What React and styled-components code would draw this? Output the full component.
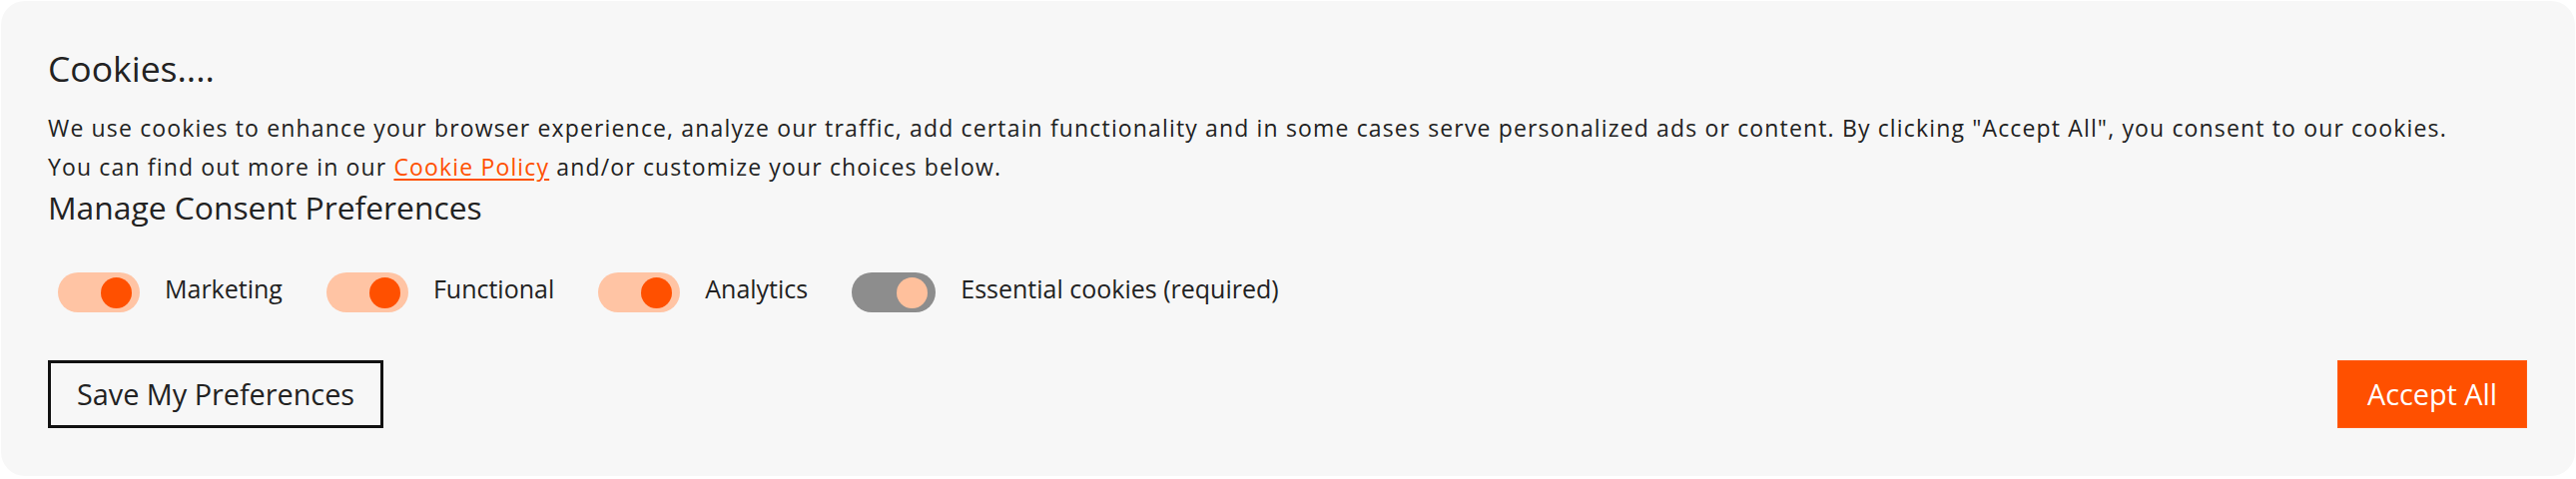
import React from "react";
import styled, { createGlobalStyle } from "styled-components";

const GlobalStyle = createGlobalStyle`
  html, body {
    margin: 0;
    padding: 0;
    background: #ffffff;
  }
  body {
    font-family: "Open Sans", "Noto Sans", "Liberation Sans", sans-serif;
    color: #222222;
  }
  * { box-sizing: border-box; }
`;

const Page = styled.div`
  padding: 1px;
`;

const Card = styled.section`
  background: #f7f7f7;
  border-radius: 24px;
  padding: 46px 48px 48px 47px;
`;

const Title = styled.h2`
  margin: 0;
  font-size: 35.5px;
  line-height: 42px;
  font-weight: 400;
  color: #222222;
`;

const Text = styled.p`
  margin: 20px 0 0;
  font-size: 23px;
  line-height: 39px;
  letter-spacing: 1.15px;
  color: #222222;
`;

const Link = styled.a`
  color: #ff5000;
  text-decoration: underline;
  text-underline-offset: 3px;
`;

const Heading = styled.h3`
  margin: 2px 0 0;
  font-size: 31.8px;
  line-height: 38px;
  font-weight: 400;
  color: #222222;
`;

const ToggleRow = styled.div`
  display: flex;
  align-items: center;
  margin-top: 46px;
  padding-left: 10px;
`;

const ToggleItem = styled.label`
  display: flex;
  align-items: center;
  gap: 25px;
  margin-right: 44px;
`;

const Track = styled.span`
  display: flex;
  align-items: center;
  justify-content: flex-end;
  width: ${(p) => (p.$locked ? "84px" : "82px")};
  height: 40px;
  padding-right: 8px;
  border-radius: 20px;
  background: ${(p) => (p.$locked ? "#8d8d8d" : "#ffc4a4")};
`;

const Knob = styled.span`
  width: 31px;
  height: 31px;
  border-radius: 50%;
  background: ${(p) => (p.$locked ? "#ffc09c" : "#ff5000")};
`;

const Label = styled.span`
  font-size: 25px;
  line-height: 30px;
  padding-bottom: 9px;
  color: #222222;
`;

const Actions = styled.div`
  display: flex;
  justify-content: space-between;
  align-items: center;
  margin-top: 48px;
`;

const Button = styled.button`
  display: flex;
  align-items: center;
  height: 68px;
  font-family: "Open Sans", "Noto Sans", "Liberation Sans", sans-serif;
  font-size: 28.8px;
  line-height: 1;
  cursor: pointer;
  border-radius: 0;
  ${(p) =>
    p.$primary
      ? `
    background: #ff5000;
    color: #ffffff;
    border: 1px solid #ff5a14;
    padding: 0 29px;
  `
      : `
    background: #f7f7f7;
    color: #222222;
    border: 3px solid #111111;
    padding: 0 26px;
  `}
`;

const toggles = [
  { label: "Marketing" },
  { label: "Functional" },
  { label: "Analytics" },
  { label: "Essential cookies (required)", locked: true },
];

export default function App() {
  return (
    <>
      <GlobalStyle />
      <Page>
        <Card>
          <Title>Cookies....</Title>
          <Text>
            We use cookies to enhance your browser experience, analyze our traffic, add certain
            functionality and in some cases serve personalized ads or content. By clicking "Accept
            All", you consent to our cookies.
            <br />
            You can find out more in our <Link href="#">Cookie Policy</Link> and/or customize your
            choices below.
          </Text>
          <Heading>Manage Consent Preferences</Heading>
          <ToggleRow>
            {toggles.map((t) => (
              <ToggleItem key={t.label}>
                <Track $locked={t.locked}>
                  <Knob $locked={t.locked} />
                </Track>
                <Label>{t.label}</Label>
              </ToggleItem>
            ))}
          </ToggleRow>
          <Actions>
            <Button>Save My Preferences</Button>
            <Button $primary>Accept All</Button>
          </Actions>
        </Card>
      </Page>
    </>
  );
}
